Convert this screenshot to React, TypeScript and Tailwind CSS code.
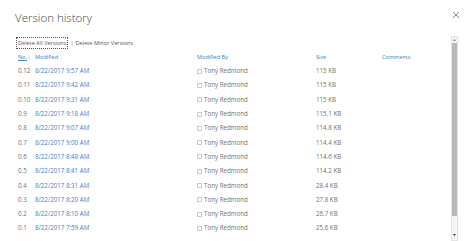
import React from "react";

const rows = [
  ["0.12", "8/22/2017 9:57 AM", "115 KB"],
  ["0.11", "8/22/2017 9:42 AM", "115 KB"],
  ["0.10", "8/22/2017 9:31 AM", "115 KB"],
  ["0.9", "8/22/2017 9:18 AM", "115.1 KB"],
  ["0.8", "8/22/2017 9:07 AM", "114.8 KB"],
  ["0.7", "8/22/2017 9:00 AM", "114.4 KB"],
  ["0.6", "8/22/2017 8:48 AM", "114.6 KB"],
  ["0.5", "8/22/2017 8:41 AM", "114.2 KB"],
  ["0.4", "8/22/2017 8:31 AM", "28.4 KB"],
  ["0.3", "8/22/2017 8:20 AM", "27.8 KB"],
  ["0.2", "8/22/2017 8:10 AM", "26.7 KB"],
  ["0.1", "8/22/2017 7:59 AM", "25.6 KB"],
];

export default function App() {
  return (
    <div
      className="w-[474px] h-[241px] bg-white overflow-hidden relative"
      style={{ fontFamily: '"Open Sans", "Noto Sans", sans-serif' }}
    >
      <div className="flex items-start justify-between pl-[15px] pr-[14px] pt-[9px]">
        <div className="text-[11.5px] font-light text-[#444] leading-[18px]">Version history</div>
        <svg width="8" height="8" viewBox="0 0 8 8" className="mt-[2px]">
          <path d="M1 1L7 7M7 1L1 7" stroke="#777" strokeWidth="0.9" />
        </svg>
      </div>
      <div className="flex">
        <div className="flex-1 pl-[16px] pt-[10px]">
          <div className="flex items-center text-[5.6px] text-[#555] leading-[10px]">
            <span className="border border-dotted border-[#555] px-[1px]">Delete All Versions</span>
            <span className="px-[2px] text-[#777]">|</span>
            <span>Delete Minor Versions</span>
          </div>
          <div className="flex text-[5.6px] text-[#3b7fc6] leading-[8px] mt-[4px] pl-[2px]">
            <div className="w-[17px] flex items-center gap-[1px]">
              <span className="underline">No.</span>
              <span className="text-[#666] text-[5px]">↓</span>
            </div>
            <div className="w-[162px]">Modified</div>
            <div className="w-[119px]">Modified By</div>
            <div className="w-[66px]">Size</div>
            <div>Comments</div>
          </div>
          <div className="pl-[2px] pt-[3px]">
            {rows.map((r) => (
              <div key={r[0]} className="flex items-center h-[14.3px] text-[6.2px] leading-[8px]">
                <div className="w-[17px] text-[#707070]">{r[0]}</div>
                <div className="w-[162px] text-[#3b7fc6]">{r[1]}</div>
                <div className="w-[119px] flex items-center gap-[2px] text-[#707070]">
                  <span className="w-[5px] h-[5px] border border-[#ccc] inline-block"></span>
                  <span>Tony Redmond</span>
                </div>
                <div className="w-[66px] text-[#707070]">{r[2]}</div>
              </div>
            ))}
          </div>
        </div>
        <div className="w-[7px] mr-[16px] mt-[9px] h-[205px] flex flex-col bg-[#f4f4f4] border border-[#e4e4e4]">
          <div className="h-[6px] flex items-center justify-center">
            <svg width="3" height="2" viewBox="0 0 3 2"><path d="M0 2L1.5 0L3 2Z" fill="#888" /></svg>
          </div>
          <div className="h-[173px] bg-[#b8b8b8]"></div>
          <div className="flex-1"></div>
          <div className="h-[10px] flex items-center justify-center">
            <svg width="3" height="2" viewBox="0 0 3 2"><path d="M0 0L1.5 2L3 0Z" fill="#333" /></svg>
          </div>
        </div>
      </div>
    </div>
  );
}
